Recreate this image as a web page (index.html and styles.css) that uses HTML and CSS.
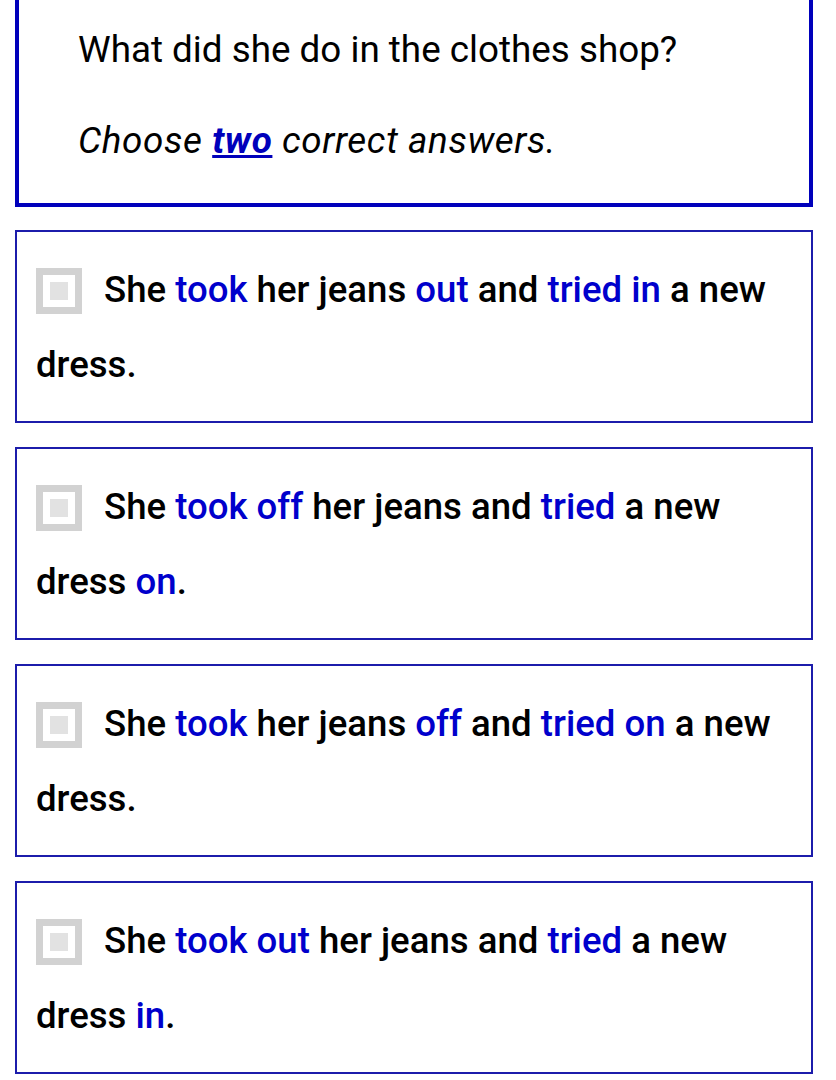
FILE: index.html
```html
<!DOCTYPE html>
<html lang="en">
  <head>
    <meta charset="UTF-8" />
    <meta name="viewport" content="width=device-width, initial-scale=1.0" />
    <title>Phrasal verbs quiz</title>
    <link rel="stylesheet" href="styles.css">
  </head>
  <body>
    <div class="quiz">
      <div class="question-box">
        <p class="question">What did she do in the clothes shop?</p>
        <p class="instruction">Choose <span class="count">two</span> correct answers.</p>
      </div>

      <label class="option"><span class="check"><span class="check-inner"></span></span>She <span class="hl">took</span> her jeans <span class="hl">out</span> and <span class="hl">tried in</span> a new dress.</label>

      <label class="option"><span class="check"><span class="check-inner"></span></span>She <span class="hl">took off</span> her jeans and <span class="hl">tried</span> a new dress <span class="hl">on</span>.</label>

      <label class="option"><span class="check"><span class="check-inner"></span></span>She <span class="hl">took</span> her jeans <span class="hl">off</span> and <span class="hl">tried on</span> a new dress.</label>

      <label class="option"><span class="check"><span class="check-inner"></span></span>She <span class="hl">took out</span> her jeans and <span class="hl">tried</span> a new dress <span class="hl">in</span>.</label>
    </div>
  </body>
</html>
```

FILE: styles.css
```css
body {
  font-family: Roboto, "Liberation Sans", Arial, sans-serif;
  margin: 0;
  padding: 0;
  background: #ffffff;
  color: #000;
}

.quiz {
  padding: 0 23px 0 15px;
}

.question-box {
  margin-top: -16px;
  padding: 40px 20px 41px 59px;
  border: 4px solid #0000bb;
  display: flex;
  flex-direction: column;
  gap: 48px;
}

.question-box p {
  margin: 0;
  font-size: 36.8px;
  line-height: 43px;
}

.instruction {
  font-style: italic;
  letter-spacing: 0.6px;
}

.count {
  font-weight: bold;
  color: #0000bb;
  text-decoration: underline;
}

.option {
  display: block;
  margin-top: 23px;
  padding: 20px 19px 19px 19px;
  border: 2px solid #1c1cab;
  font-size: 36.6px;
  font-weight: 500;
  line-height: 75px;
}

.option + .option {
  margin-top: 24px;
}

.hl {
  color: #0000cc;
}

.check {
  display: inline-flex;
  align-items: center;
  justify-content: center;
  box-sizing: border-box;
  width: 46px;
  height: 46px;
  margin-right: 22px;
  border: 7px solid #d2d2d2;
  background: #fff;
  vertical-align: 2px;
}

.check-inner {
  width: 18px;
  height: 18px;
  background: #e2e2e2;
}
```
